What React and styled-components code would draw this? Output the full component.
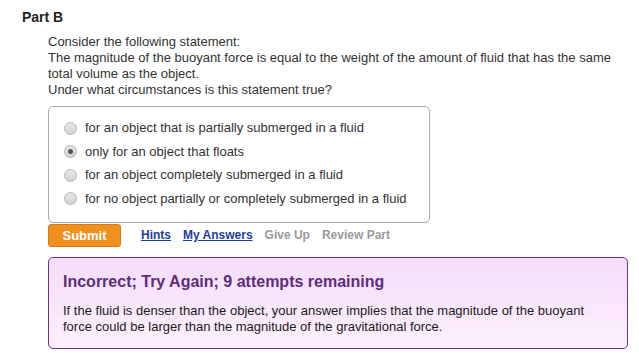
import React, { useState } from 'react';
import styled, { createGlobalStyle } from 'styled-components';

const GlobalStyle = createGlobalStyle`
  html, body {
    margin: 0;
    padding: 0;
    background: #ffffff;
  }
  body {
    font-family: Arial, "Liberation Sans", sans-serif;
    color: #333;
  }
`;

const Page = styled.div`
  width: 639px;
  height: 358px;
  padding: 8px 12px 0 22px;
  box-sizing: border-box;
  overflow: hidden;
`;

const PartTitle = styled.h3`
  margin: 0;
  font-size: 14px;
  font-weight: bold;
  color: #222;
  line-height: 18px;
`;

const Body = styled.div`
  padding-left: 26px;
  margin-top: 8px;
`;

const Prompt = styled.div`
  font-size: 13px;
  line-height: 16px;
  color: #333;
  width: 575px;
`;

const OptionsBox = styled.div`
  width: 382px;
  box-sizing: border-box;
  margin-top: 8px;
  border: 1px solid #a9a9a9;
  border-radius: 5px;
  padding: 13px 0 15px 15px;
  display: flex;
  flex-direction: column;
  gap: 7.5px;
`;

const Option = styled.label`
  display: flex;
  align-items: center;
  gap: 8px;
  font-size: 13px;
  line-height: 16px;
  color: #333;
  cursor: pointer;
`;

const Radio = styled.span`
  width: 11px;
  height: 11px;
  border-radius: 50%;
  border: 1px solid #b4b4b4;
  background: linear-gradient(#e8e8e8, #d2d2d2);
  display: flex;
  align-items: center;
  justify-content: center;
  flex-shrink: 0;
  &::after {
    content: '';
    width: 5px;
    height: 5px;
    border-radius: 50%;
    background: #555;
    display: ${(p) => (p.$checked ? 'block' : 'none')};
  }
`;

const ActionRow = styled.div`
  display: flex;
  align-items: center;
  margin-top: 1px;
  gap: 12px;
`;

const SubmitButton = styled.button`
  width: 73px;
  height: 23px;
  border: 1px solid #d97a10;
  border-radius: 3px;
  background: #f0901f;
  color: #fff;
  font-family: Arial, "Liberation Sans", sans-serif;
  font-weight: bold;
  font-size: 13px;
  padding: 0;
  margin-right: 8px;
  cursor: pointer;
`;

const ActionLink = styled.a`
  font-size: 12px;
  font-weight: bold;
  color: ${(p) => (p.$disabled ? '#9a9a9a' : '#1d3c9c')};
  text-decoration: ${(p) => (p.$disabled ? 'none' : 'underline')};
  cursor: pointer;
`;

const Feedback = styled.div`
  width: 580px;
  box-sizing: border-box;
  margin-top: 10px;
  border: 1px solid #6c2f8a;
  border-radius: 5px;
  background: linear-gradient(#f4dcfa, #fdf1fd);
  padding: 14px 14px 13px 14px;
`;

const FeedbackTitle = styled.div`
  font-size: 16px;
  font-weight: bold;
  color: #5e2d79;
  line-height: 20px;
`;

const FeedbackText = styled.div`
  margin-top: 11px;
  font-size: 13px;
  line-height: 16px;
  color: #1a1a1a;
`;

const options = [
  'for an object that is partially submerged in a fluid',
  'only for an object that floats',
  'for an object completely submerged in a fluid',
  'for no object partially or completely submerged in a fluid',
];

const App = () => {
  const [selected, setSelected] = useState(1);

  return (
    <Page>
      <GlobalStyle />
      <PartTitle>Part B</PartTitle>
      <Body>
        <Prompt>
          Consider the following statement:
          <br />
          The magnitude of the buoyant force is equal to the weight of the amount of fluid that has the same total volume as the object.
          <br />
          Under what circumstances is this statement true?
        </Prompt>
        <OptionsBox>
          {options.map((text, i) => (
            <Option key={i} onClick={() => setSelected(i)}>
              <Radio $checked={selected === i} />
              {text}
            </Option>
          ))}
        </OptionsBox>
        <ActionRow>
          <SubmitButton>Submit</SubmitButton>
          <ActionLink>Hints</ActionLink>
          <ActionLink>My Answers</ActionLink>
          <ActionLink $disabled>Give Up</ActionLink>
          <ActionLink $disabled>Review Part</ActionLink>
        </ActionRow>
        <Feedback>
          <FeedbackTitle>Incorrect; Try Again; 9 attempts remaining</FeedbackTitle>
          <FeedbackText>
            If the fluid is denser than the object, your answer implies that the magnitude of the buoyant force could be larger than the magnitude of the gravitational force.
          </FeedbackText>
        </Feedback>
      </Body>
    </Page>
  );
};

export default App;
